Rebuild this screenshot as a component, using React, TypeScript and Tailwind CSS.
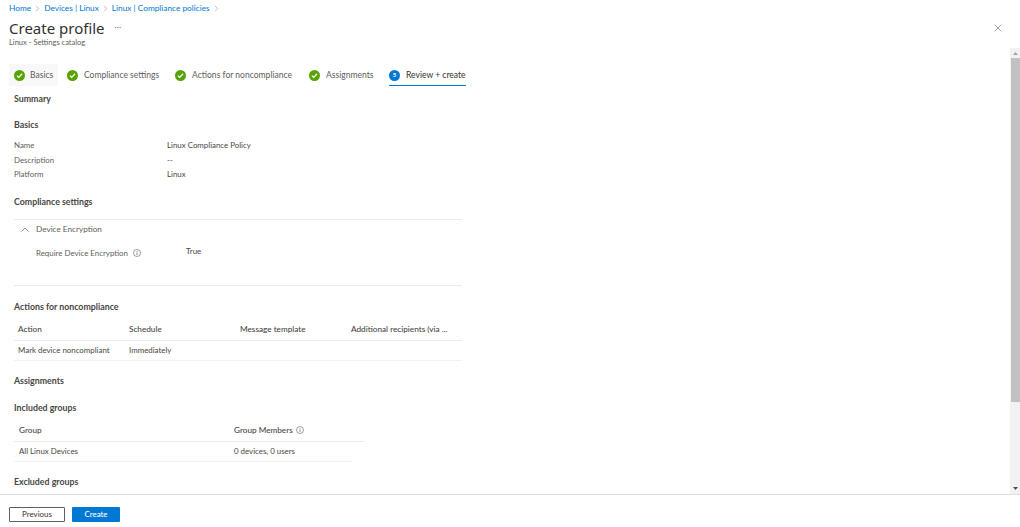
import { X } from "lucide-react"

const font = { fontFamily: 'Lato, "Noto Sans", sans-serif' }
const titleFont = { fontFamily: '"Noto Sans", sans-serif' }

function Check() {
  return (
    <svg width="11" height="11" viewBox="0 0 11 11" className="shrink-0">
      <circle cx="5.5" cy="5.5" r="5.5" fill="#57a300" />
      <path d="M2.9 5.6l1.8 1.8 3.4-3.6" fill="none" stroke="#fff" strokeWidth="1.3" />
    </svg>
  )
}

function Info({ className = "" }: { className?: string }) {
  return (
    <svg width="8" height="8" viewBox="0 0 8 8" className={`shrink-0 ${className}`}>
      <circle cx="4" cy="4" r="3.5" fill="none" stroke="#605e5c" strokeWidth="0.6" />
      <path d="M4 3.4v2.6M4 2v.8" stroke="#605e5c" strokeWidth="0.7" />
    </svg>
  )
}

function Crumb({ label }: { label: string }) {
  return (
    <>
      <span className="text-[#0078d4]">{label}</span>
      <svg width="5" height="7" viewBox="0 0 5 7" className="mx-[4px]">
        <path d="M1 .8l2.7 2.7L1 6.2" fill="none" stroke="#a19f9d" strokeWidth="0.7" />
      </svg>
    </>
  )
}

function Tab({ label, width }: { label: string; width: string }) {
  return (
    <div className={`flex items-center gap-[6px] whitespace-nowrap ${width}`}>
      <Check />
      <span>{label}</span>
    </div>
  )
}

function Heading({ children, className = "" }: { children: string; className?: string }) {
  return <div className={`text-[8.8px] font-bold leading-[12px] text-[#484644] ${className}`}>{children}</div>
}

function Field({ name, value }: { name: string; value: string }) {
  return (
    <div className="flex h-[14.5px] items-center">
      <span className="w-[153px] text-[#605e5c]">{name}</span>
      <span className="text-[#484644]">{value}</span>
    </div>
  )
}

export default function App() {
  return (
    <div className="flex h-[527px] w-[1020px] flex-col overflow-hidden bg-white text-[7.9px] text-[#484644]" style={font}>
      <header className="flex shrink-0 justify-between pl-[9px] pr-[16px]">
        <div>
          <div className="flex h-[16px] items-center text-[8.3px]">
            <Crumb label="Home" />
            <Crumb label="Devices | Linux" />
            <Crumb label="Linux | Compliance policies" />
          </div>
          <div className="mt-[3px] flex h-[18px] items-center" style={titleFont}>
            <h1 className="text-[15px] font-normal leading-[18px] text-[#323130]">Create profile</h1>
            <span className="ml-[10px] text-[8px] leading-[8px] text-[#605e5c]">···</span>
          </div>
          <div className="mt-[1px] text-[7.5px] leading-[10px] text-[#605e5c]">Linux - Settings catalog</div>
        </div>
        <X className="mt-[22px] size-[12px] text-[#605e5c]" strokeWidth={1.2} />
      </header>

      <div className="flex min-h-0 flex-1">
        <main className="min-w-0 flex-1 overflow-hidden pl-[14px]">
          <nav className="-ml-[5px] mt-[16px] flex h-[22px] items-center text-[8.55px] text-[#605e5c]">
            <div className="mr-[9px] flex h-[22px] w-[49px] items-center gap-[5px] bg-[#f8f8f8] pl-[5px]">
              <Check />
              <span>Basics</span>
            </div>
            <Tab label="Compliance settings" width="w-[108px]" />
            <Tab label="Actions for noncompliance" width="w-[134px]" />
            <Tab label="Assignments" width="w-[80px]" />
            <div className="flex h-[22px] w-[77px] items-center gap-[6px] whitespace-nowrap border-b-[1.5px] border-[#0078d4] pt-[1px] text-[#323130]">
              <span className="flex size-[11px] items-center justify-center rounded-full bg-[#0078d4] text-[6px] font-bold leading-none text-white">5</span>
              <span>Review + create</span>
            </div>
          </nav>

          <Heading className="mt-[7px]">Summary</Heading>
          <Heading className="mt-[14px]">Basics</Heading>
          <div className="mt-[8px]">
            <Field name="Name" value="Linux Compliance Policy" />
            <Field name="Description" value="--" />
            <Field name="Platform" value="Linux" />
          </div>

          <Heading className="mt-[13px]">Compliance settings</Heading>
          <div className="mt-[11px] w-[448px] border-y border-[#edebe9] pb-[17px]">
            <div className="flex h-[19px] items-center pl-[7px] text-[8.2px] text-[#605e5c]">
              <svg width="8" height="5" viewBox="0 0 8 5" className="mr-[7px]">
                <path d="M.5 4.5L4 1l3.5 3.5" fill="none" stroke="#605e5c" strokeWidth="0.7" />
              </svg>
              <span>Device Encryption</span>
            </div>
            <div className="mt-[7px] flex h-[22px] items-start pl-[22px] pt-[2px]">
              <span className="flex w-[150px] items-center text-[#605e5c]">
                Require Device Encryption
                <Info className="ml-[5px]" />
              </span>
              <span className="-mt-[2px] text-[#484644]">True</span>
            </div>
          </div>

          <Heading className="mt-[15px]">Actions for noncompliance</Heading>
          <div className="mt-[6px] w-[448px]">
            <div className="flex h-[22px] items-center border-b border-[#edebe9] pl-[4px] text-[8.2px] font-medium text-[#484644]">
              <span className="w-[111px]">Action</span>
              <span className="w-[111px]">Schedule</span>
              <span className="w-[111px]">Message template</span>
              <span>Additional recipients (via ...</span>
            </div>
            <div className="flex h-[20px] items-center border-b border-[#f3f2f1] pl-[4px] pt-[2px]">
              <span className="w-[111px]">Mark device noncompliant</span>
              <span>Immediately</span>
            </div>
          </div>

          <Heading className="mt-[14px]">Assignments</Heading>
          <Heading className="mt-[15px]">Included groups</Heading>
          <div className="mt-[6px]">
            <div className="flex h-[22px] w-[350px] items-center border-b border-[#edebe9] pl-[5px] text-[8.2px] font-medium">
              <span className="w-[215px]">Group</span>
              <span className="flex items-center gap-[3px]">
                Group Members
                <Info />
              </span>
            </div>
            <div className="flex h-[20px] w-[339px] items-center border-b border-[#f3f2f1] pl-[5px] pt-[2px]">
              <span className="w-[215px]">All Linux Devices</span>
              <span>0 devices, 0 users</span>
            </div>
          </div>
          <Heading className="mt-[14px]">Excluded groups</Heading>
        </main>

        <div className="flex w-[10px] shrink-0 flex-col items-center bg-[#f1f1f1]">
          <svg width="5" height="3" viewBox="0 0 5 3" className="mt-[4px]">
            <path d="M2.5 0L5 3H0z" fill="#a3a3a3" />
          </svg>
          <div className="mt-[3px] h-[344px] w-[9px] bg-[#c1c1c1]" />
          <div className="flex-1" />
          <svg width="5" height="3" viewBox="0 0 5 3" className="mb-[4px]">
            <path d="M0 0h5L2.5 3z" fill="#505050" />
          </svg>
        </div>
      </div>

      <footer className="flex h-[33px] shrink-0 items-start gap-[7px] border-t border-[#e1dfdd] pl-[9px] pt-[12px]">
        <button className="flex h-[15px] w-[56px] items-center justify-center rounded-[1px] border border-[#605e5c] bg-white font-medium text-[#484644]">Previous</button>
        <button className="flex h-[15px] w-[48px] items-center justify-center rounded-[1px] bg-[#0078d4] font-medium text-white">Create</button>
      </footer>
    </div>
  )
}
